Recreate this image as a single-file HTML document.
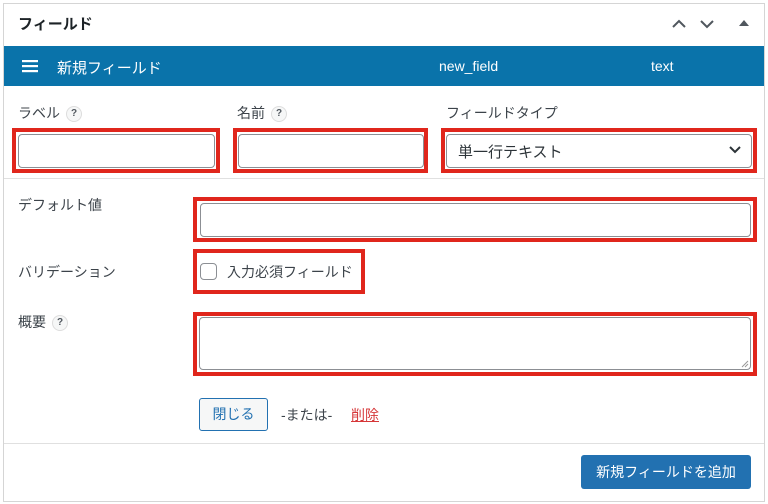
<!DOCTYPE html>
<html><head><meta charset="utf-8"><style>
*{box-sizing:border-box;margin:0;padding:0}
body{width:768px;height:504px;background:#fff;font-family:"Liberation Sans","Noto Sans CJK JP",sans-serif;position:relative;overflow:hidden;color:#1d2327}
.a{position:absolute}
.red{position:absolute;border:4px solid #e0261c}
.inp{position:absolute;border:1px solid #8c8f94;border-radius:4px;background:#fff}
.lbl{position:absolute;font-size:14px;color:#3c434a}
.q{display:inline-block;width:16px;height:16px;border-radius:50%;border:1px solid #ddd;background:#f6f7f7;font-size:10px;font-weight:bold;text-align:center;line-height:14px;color:#50575e;vertical-align:2px;margin-left:6px}
</style></head><body>
<div class="a" style="left:3px;top:3px;width:762px;height:499px;border:1px solid #d5d5d5"></div>
<div class="a" style="left:18px;top:13px;font-size:15px;font-weight:bold;color:#1d2327">フィールド</div>
<svg class="a" style="left:670px;top:16px" width="90" height="16" viewBox="0 0 90 16">
<path d="M3 11 L9 5 L15 11" fill="none" stroke="#50575e" stroke-width="2"/>
<path d="M31 5 L37 11 L43 5" fill="none" stroke="#50575e" stroke-width="2"/>
<path d="M69 10 L74 4 L79 10 Z" fill="#50575e"/>
</svg>
<div class="a" style="left:4px;top:46px;width:760px;height:40px;background:#0a73aa"></div>
<svg class="a" style="left:22px;top:59px" width="18" height="14"><rect x="0" y="1" width="16" height="2.2" fill="#fff"/><rect x="0" y="6" width="16" height="2.2" fill="#fff"/><rect x="0" y="11" width="16" height="2.2" fill="#fff"/></svg>
<div class="a" style="left:57px;top:57px;font-size:15px;color:#fff">新規フィールド</div>
<div class="a" style="left:439px;top:58px;font-size:14px;color:#fff">new_field</div>
<div class="a" style="left:651px;top:58px;font-size:14px;color:#fff">text</div>

<div class="lbl" style="left:18px;top:103px">ラベル<span class="q">?</span></div>
<div class="lbl" style="left:237px;top:103px">名前<span class="q">?</span></div>
<div class="lbl" style="left:446px;top:103px">フィールドタイプ</div>
<div class="red" style="left:12px;top:128px;width:208px;height:45px"></div>
<div class="inp" style="left:18px;top:134px;width:197px;height:34px"></div>
<div class="red" style="left:233px;top:128px;width:195px;height:45px"></div>
<div class="inp" style="left:238px;top:134px;width:186px;height:34px"></div>
<div class="red" style="left:441px;top:128px;width:316px;height:45px"></div>
<div class="inp" style="left:446px;top:134px;width:306px;height:34px"></div>
<div class="a" style="left:458px;top:141px;font-size:15px;color:#2c3338">単一行テキスト</div>
<svg class="a" style="left:728px;top:145px" width="14" height="10"><path d="M2 2 L7 7 L12 2" fill="none" stroke="#2c3338" stroke-width="2"/></svg>

<div class="a" style="left:4px;top:178px;width:760px;height:1px;background:#e0e0e0"></div>
<div class="lbl" style="left:18px;top:195px">デフォルト値</div>
<div class="red" style="left:193px;top:197px;width:564px;height:45px"></div>
<div class="inp" style="left:200px;top:203px;width:551px;height:34px"></div>
<div class="lbl" style="left:18px;top:262px">バリデーション</div>
<div class="red" style="left:193px;top:249px;width:172px;height:45px"></div>
<div class="a" style="left:200px;top:263px;width:17px;height:17px;border:1px solid #8c8f94;border-radius:4px"></div>
<div class="a" style="left:227px;top:262px;font-size:14px;color:#3c434a">入力必須フィールド</div>
<div class="lbl" style="left:18px;top:312px">概要<span class="q">?</span></div>
<div class="red" style="left:193px;top:312px;width:564px;height:64px"></div>
<div class="inp" style="left:199px;top:317px;width:552px;height:53px"></div>
<svg class="a" style="left:741px;top:360px" width="8" height="8"><path d="M1 7 L7 1 M4 7 L7 4" stroke="#999" stroke-width="1"/></svg>

<div class="a" style="left:199px;top:398px;width:69px;height:33px;border:1px solid #2271b1;border-radius:3px;background:#f6f7f7;color:#2271b1;font-size:14px;text-align:center;line-height:31px">閉じる</div>
<div class="a" style="left:281px;top:405px;font-size:14px;color:#3c434a">-または-</div>
<div class="a" style="left:351px;top:405px;font-size:14px;color:#d63638;text-decoration:underline">削除</div>

<div class="a" style="left:4px;top:443px;width:760px;height:1px;background:#e0e0e0"></div>
<div class="a" style="left:581px;top:455px;width:170px;height:34px;background:#2271b1;border-radius:3px;color:#fff;font-size:14px;text-align:center;line-height:34px">新規フィールドを追加</div>
</body></html>
